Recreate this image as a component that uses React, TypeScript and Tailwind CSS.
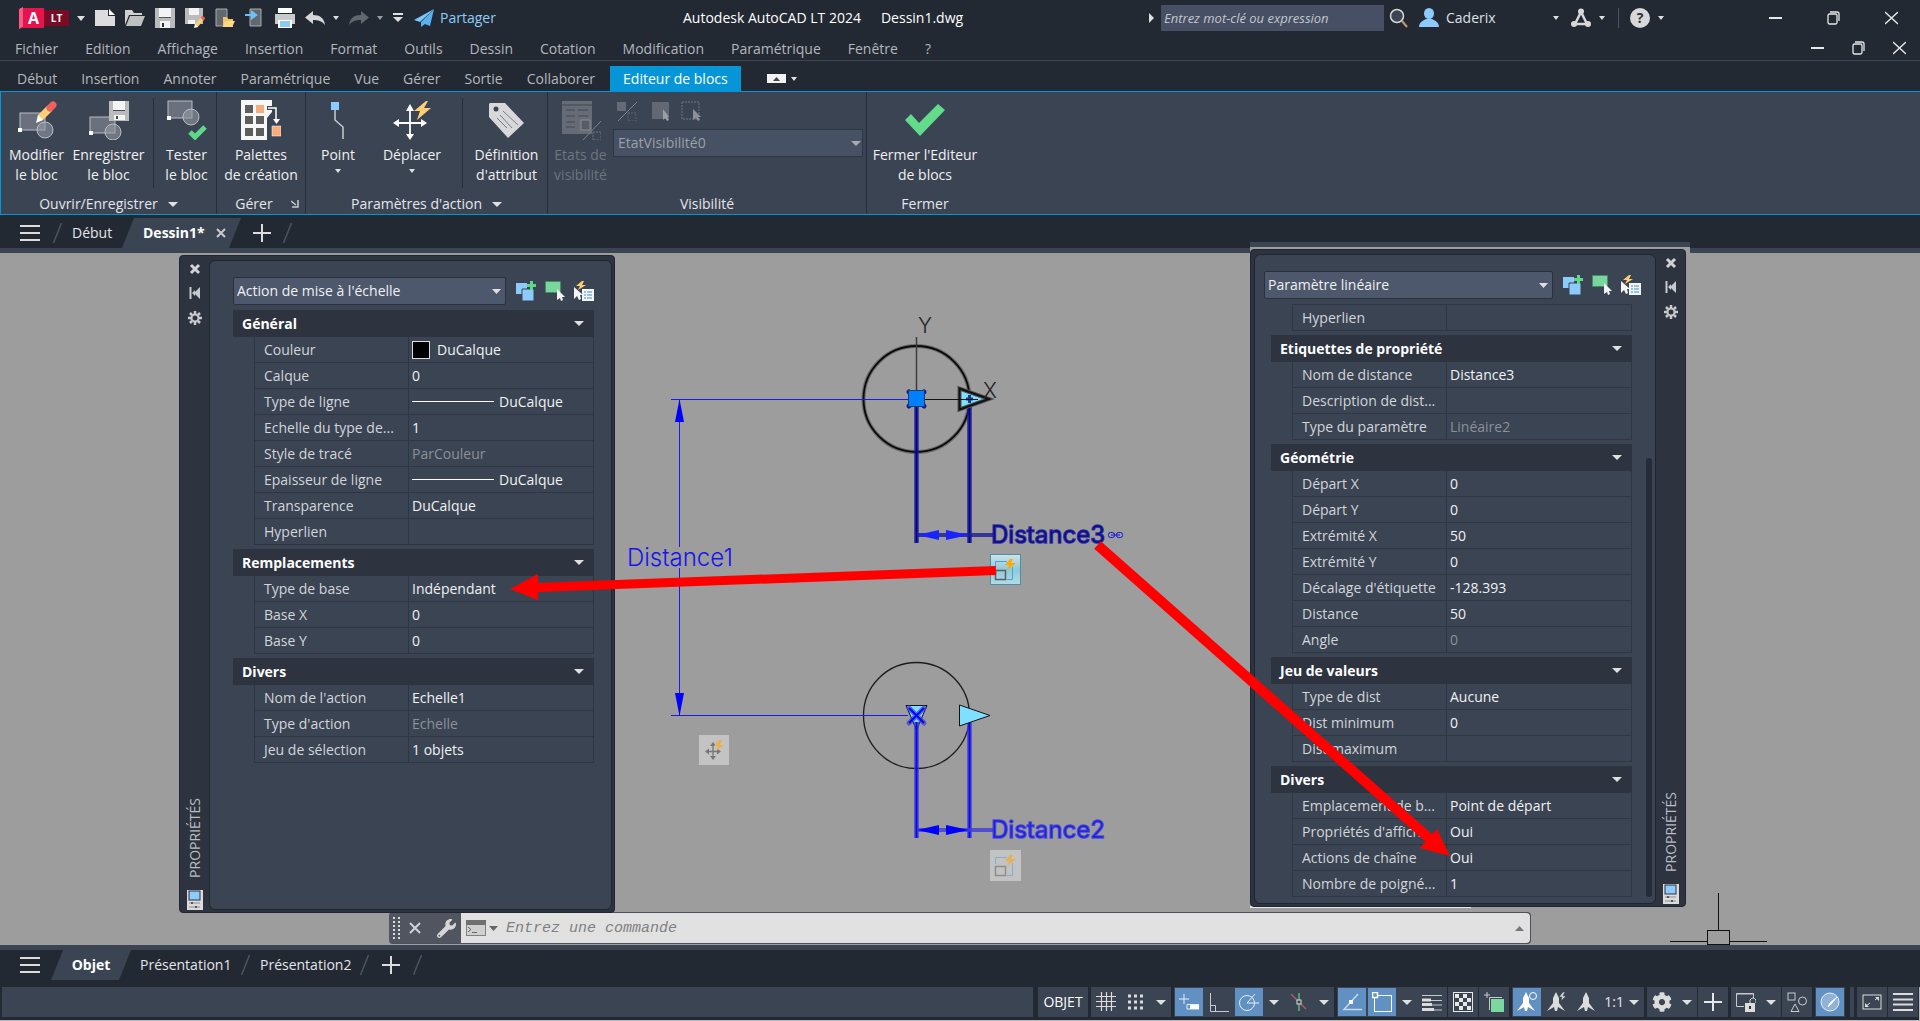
import React from "react";
import { FaCog, FaWrench } from "react-icons/fa";

type IconProps = {
  w?: number;
  h?: number;
  className?: string;
  children: React.ReactNode;
};

const Svg = ({ w = 20, h = 20, className = "", children }: IconProps) => (
  <svg width={w} height={h} viewBox={`0 0 ${w} ${h}`} className={`shrink-0 ${className}`} fill="none" aria-hidden="true">
    {children}
  </svg>
);

const Caret = ({ w = 10, h = 5, color = "#e0e0e0" }: { w?: number; h?: number; color?: string }) => (
  <Svg w={w} h={h}>
    <path d={`M0 0H${w}L${w / 2} ${h}Z`} fill={color} />
  </Svg>
);

const BOLT = "M14 0L2 10H8L5 19L19 7H12L16 0Z";

/* ---------- Title bar ---------- */

const QuickIcons = () => (
  <div className="flex items-center">
    <button aria-label="Nouveau" className="w-[30px]">
      <Svg>
        <path d="M0 2H13V8H20V18H0Z" fill="#dcdcdc" />
        <path d="M14 1L20 7H14Z" fill="#fff" />
      </Svg>
    </button>
    <button aria-label="Ouvrir" className="w-[30px]">
      <Svg>
        <path d="M0 2H7L9 5H17V7H4L0 17Z" fill="#d0d0d0" />
        <path d="M5 8H20L16 18H1Z" fill="#bfc0c2" />
      </Svg>
    </button>
    <button aria-label="Enregistrer" className="w-[30px]">
      <Svg>
        <path d="M0 0H20V20H0Z" fill="#b9bbbd" />
        <path d="M4 0H16V9H4ZM5 13H15V20H5Z" fill="#f4f4f4" />
        <path d="M4 9H16V10H4Z" fill="#55595f" />
        <path d="M7 15H9V19H7Z" fill="#333" />
      </Svg>
    </button>
    <button aria-label="Enregistrer sous" className="w-[30px]">
      <Svg>
        <path d="M0 0H18V16H0Z" fill="#b9bbbd" />
        <path d="M4 0H14V7H4ZM3 12H10V16H3Z" fill="#f4f4f4" />
        <path d="M11 18L17 11" stroke="#f5cf74" strokeWidth="4" />
        <path d="M17 11L19 9" stroke="#f06050" strokeWidth="4" />
        <path d="M9 20L10 16L13 19Z" fill="#fff" />
      </Svg>
    </button>
    <button aria-label="Ouvrir depuis le mobile" className="w-[30px]">
      <Svg>
        <path d="M1 1H12V18H1Z" fill="#63676e" stroke="#a9abae" />
        <path d="M8 9H12L13 11H18V19H8Z" fill="#f0c56a" />
        <path d="M10 13H20L17 19H8Z" fill="#ffd983" />
      </Svg>
    </button>
    <button aria-label="Enregistrer vers le mobile" className="w-[30px]">
      <Svg>
        <path d="M5 1H16V18H5Z" fill="#63676e" stroke="#a9abae" />
        <path d="M0 6H6V2L13 7L6 12V8H0Z" fill="#6fc1f7" />
      </Svg>
    </button>
    <button aria-label="Imprimer" className="w-[30px]">
      <Svg>
        <path d="M3 0H17V5H3Z" fill="#fff" />
        <path d="M0 6H20V16H0Z" fill="#c9cacc" />
        <path d="M3 12H17V20H3Z" fill="#fff" />
        <path d="M5 13H15V19H5Z" fill="#8ccaf8" />
      </Svg>
    </button>
    <button aria-label="Annuler" className="flex w-[44px] items-center gap-2">
      <Svg>
        <path d="M8 3V7C15 7 19 10 20 17C17 13 13 12 8 12V16L0 9.500Z" fill="#d6d6d6" />
      </Svg>
      <Caret w={6} h={4} />
    </button>
    <button aria-label="Rétablir" className="flex w-[44px] items-center gap-2">
      <Svg>
        <path d="M12 3V7C5 7 1 10 0 17C3 13 7 12 12 12V16L20 9.500Z" fill="#62666d" />
      </Svg>
      <Caret w={6} h={4} color="#9a9da2" />
    </button>
    <button aria-label="Personnaliser" className="w-[21px]">
      <Svg w={10} h={10}>
        <path d="M0 1H10" stroke="#e0e0e0" strokeWidth="2" />
        <path d="M0 4H10L5 9Z" fill="#e0e0e0" />
      </Svg>
    </button>
    <button className="flex items-center gap-[6px] text-[#8fcdf7]">
      <Svg>
        <path d="M20 1L0 12L6 14Z" fill="#7fc6f6" />
        <path d="M20 1L7 14V19L11 16L16 18Z" fill="#58b0ee" />
      </Svg>
      Partager
    </button>
  </div>
);

const WindowButtons = ({ small }: { small?: boolean }) => (
  <div className={small ? "flex items-center gap-[28px] pr-[14px]" : "flex items-center gap-[45px] pr-[22px]"}>
    <button aria-label="Réduire">
      <Svg w={13} h={14}>
        <path d="M0 7H13" stroke="#e8e8e8" strokeWidth="2" />
      </Svg>
    </button>
    <button aria-label="Restaurer">
      <Svg w={13} h={14}>
        <rect x="1" y="3" width="9" height="10" rx="1.500" stroke="#e8e8e8" strokeWidth="1.300" />
        <path d="M3 1H10Q12 1 12 3V10" stroke="#e8e8e8" strokeWidth="1.300" />
      </Svg>
    </button>
    <button aria-label="Fermer">
      <Svg w={13} h={14}>
        <path d="M0 1L13 13M13 1L0 13" stroke="#e8e8e8" strokeWidth="1.300" />
      </Svg>
    </button>
  </div>
);

const TitleBar = () => (
  <header className="flex h-9 items-center">
    <button aria-label="Menu de l'application" className="flex w-[95px] items-center gap-2 pl-[19px]">
      <span className="flex items-center text-white">
        <Svg w={4} h={22}>
          <path d="M4 0V20L0 22V2Z" fill="#ff5a83" />
        </Svg>
        <span className="flex h-5 w-[21px] items-center justify-center bg-[#e6134f] text-base font-bold">A</span>
        <span className="flex h-4 w-[25px] items-center justify-center bg-[#7a0a26] text-[10px] font-bold">LT</span>
      </span>
      <Caret w={8} h={5} />
    </button>
    <QuickIcons />
    <div className="ml-auto flex items-center">
      <h1 className="flex w-[466px] gap-5 text-white">
        <span>Autodesk AutoCAD LT 2024</span>
        <span>Dessin1.dwg</span>
      </h1>
      <Svg w={5} h={10} className="mr-[7px]">
        <path d="M0 0V10L5 5Z" fill="#e0e0e0" />
      </Svg>
      <input
        aria-label="Recherche"
        placeholder="Entrez mot-clé ou expression"
        className="h-[26px] w-[223px] bg-[#464f63] pl-[3px] text-[13px] italic placeholder:text-[#c3c6cc]"
      />
      <button aria-label="Rechercher" className="ml-[5px] w-[30px]">
        <Svg w={20} h={20}>
          <circle cx="8" cy="8" r="6.500" fill="#3d4552" stroke="#d8d8d8" strokeWidth="1.500" />
          <path d="M13 13L18 19" stroke="#c49a6c" strokeWidth="2" />
        </Svg>
      </button>
      <button className="flex w-[152px] items-center justify-between text-[#dfe1e4]">
        <span className="flex items-center gap-[7px]">
          <Svg>
            <ellipse cx="10" cy="5.500" rx="5" ry="5.500" fill="#8ccbfb" />
            <path d="M0 19C0 14 5 12 7 11H13C15 12 20 14 20 19Z" fill="#8ccbfb" />
          </Svg>
          Caderix
        </span>
        <span className="pr-3">
          <Caret w={6} h={4} />
        </span>
      </button>
      <button aria-label="Autodesk App Store" className="flex w-[47px] items-center gap-2">
        <Svg>
          <path d="M10 4L4 16H16Z" stroke="#d8d8d8" strokeWidth="2.500" />
          <circle cx="10" cy="3.500" r="3" fill="#d8d8d8" />
          <circle cx="3" cy="16" r="3" fill="#d8d8d8" />
          <circle cx="17" cy="16" r="3" fill="#d8d8d8" />
        </Svg>
        <Caret w={6} h={4} />
      </button>
      <button aria-label="Aide" className="flex items-center gap-2 border-l border-[#4a5468] pl-[11px]">
        <span className="flex size-5 items-center justify-center rounded-full bg-[#d8d8d8] font-bold text-[#2c323c]">?</span>
        <Caret w={6} h={4} />
      </button>
      <div className="w-[105px]" />
      <WindowButtons />
    </div>
  </header>
);

/* ---------- Menus and ribbon tabs ---------- */

const menus = ["Fichier", "Edition", "Affichage", "Insertion", "Format", "Outils", "Dessin", "Cotation", "Modification", "Paramétrique", "Fenêtre", "?"];

const ribbonTabs = ["Début", "Insertion", "Annoter", "Paramétrique", "Vue", "Gérer", "Sortie", "Collaborer"];

const MenuBar = () => (
  <nav className="flex h-[25px] items-center justify-between border-b border-[#3d4553] pl-[15px]">
    <div className="flex gap-[27px] pt-px text-[#b4b7bc]">
      {menus.map((m) => (
        <button key={m}>{m}</button>
      ))}
    </div>
    <WindowButtons small />
  </nav>
);

const RibbonTabs = () => (
  <nav className="flex h-[30px] items-end pl-[5px] text-[#b4b7bc]">
    {ribbonTabs.map((t) => (
      <button key={t} className="h-[25px] px-3">
        {t}
      </button>
    ))}
    <button className="ml-[3px] h-[25px] bg-[#0696d7] px-[13px] text-white">Editeur de blocs</button>
    <button aria-label="Réduire le ruban" className="ml-[26px] flex h-[25px] items-center gap-[5px]">
      <Svg w={19} h={9}>
        <rect width="19" height="9" fill="#f2f2f2" />
        <path d="M6 7H13L9.500 3Z" fill="#444" />
      </Svg>
      <Caret w={6} h={4} />
    </button>
  </nav>
);

/* ---------- Ribbon ---------- */

type RibbonButtonProps = {
  lines: string[];
  icon: React.ReactNode;
  className: string;
  drop?: boolean;
  disabled?: boolean;
};

const RibbonButton = ({ lines, icon, className, drop, disabled }: RibbonButtonProps) => (
  <button disabled={disabled} className={`flex flex-col items-center pt-2 ${disabled ? "text-[#6d7480]" : "text-[#f0f0f0]"} ${className}`}>
    {icon}
    <span className="mt-[5px] flex flex-col items-center leading-5 whitespace-nowrap">
      {lines.map((l) => (
        <span key={l}>{l}</span>
      ))}
    </span>
    {drop && (
      <span className="mt-1">
        <Caret w={6} h={4} />
      </span>
    )}
  </button>
);

const PanelTitle = ({ children }: { children: React.ReactNode }) => (
  <div className="flex h-5 items-center justify-center gap-[10px] leading-5 text-[#e4e6e9]">{children}</div>
);

const Divider = () => <div className="my-[6px] w-px bg-[#272d38]" />;

const EditBlockIcon = () => (
  <Svg w={40} h={40}>
    <rect x="3" y="13" width="25" height="17" fill="#6a707e" stroke="#b9bcc2" />
    <circle cx="28" cy="30" r="8" fill="#949aa5" fillOpacity=".6" stroke="#b9bcc2" />
    <rect x="1" y="28" width="4" height="4" fill="#fff" />
    <path d="M23 18L33 8" stroke="#ffcf77" strokeWidth="7" />
    <path d="M33 8L36 5" stroke="#f0605c" strokeWidth="7" strokeLinecap="round" />
    <path d="M19 23L21 15L26 20Z" fill="#fff" />
  </Svg>
);

const SaveBlockIcon = () => (
  <Svg w={40} h={40}>
    <rect x="1" y="17" width="25" height="16" fill="#6a707e" stroke="#b9bcc2" />
    <circle cx="24" cy="32" r="8" fill="#949aa5" fillOpacity=".6" stroke="#b9bcc2" />
    <rect x="0" y="31" width="4" height="4" fill="#fff" />
    <path d="M20 1H40V21H20Z" fill="#b9bbbd" />
    <path d="M24 1H36V10H24ZM25 15H36V20H25Z" fill="#f4f4f4" />
    <path d="M24 10H36V11H24ZM27 16H29V19H27Z" fill="#444950" />
  </Svg>
);

const TestBlockIcon = () => (
  <Svg w={40} h={40}>
    <rect x="1" y="1" width="24" height="17" fill="#6a707e" stroke="#b9bcc2" />
    <circle cx="24" cy="17" r="8" fill="#949aa5" fillOpacity=".6" stroke="#b9bcc2" />
    <rect x="0" y="16" width="4" height="4" fill="#fff" />
    <path d="M23 32L28 37L38 27" stroke="#5fd88a" strokeWidth="5" />
  </Svg>
);

const PalettesIcon = () => (
  <Svg w={40} h={40}>
    <path d="M0 0H31V12L26 18V40H0Z" fill="#f7f7f7" />
    {[5, 16, 28].map((y) => (
      <g key={y}>
        <rect x="4" y={y} width="8" height="8" fill="#5d5d5d" />
        <rect x="15" y={y} width="8" height="8" fill={y === 5 ? "#f5ad7e" : "#5d5d5d"} />
      </g>
    ))}
    <path d="M26 8H35V24" stroke="#3b4453" strokeWidth="4" />
    <path d="M27 8H35V21" stroke="#fff" strokeWidth="1.500" />
    <path d="M32 19H39L35.500 24Z" fill="#fff" />
    <rect x="31" y="26" width="9" height="10" fill="#f5ad7e" stroke="#fff" strokeWidth=".5" />
  </Svg>
);

const PointIcon = () => (
  <Svg w={40} h={40}>
    <path d="M17 10V20L25 27V39" stroke="#c9ccd0" strokeWidth="1.500" />
    <rect x="13" y="2" width="8" height="8" fill="#8ccbfb" />
  </Svg>
);

const MoveIcon = () => (
  <Svg w={40} h={40}>
    <path d="M18 8V37M4 23H32" stroke="#fff" strokeWidth="1.800" />
    <path d="M18 4L22 11H14ZM18 40L22 34H14ZM1 23L7 19V27ZM35 23L29 19V27Z" fill="#fff" />
    <path d={BOLT} transform="translate(20 1)" fill="#ffcf77" />
  </Svg>
);

const TagIcon = () => (
  <Svg w={40} h={40}>
    <path d="M3 3H18L37 23L21 38L2 17V4Z" fill="#d8d8da" />
    <circle cx="9" cy="9" r="2.500" fill="#3b4453" />
    <path d="M16 11L31 25M13 15L25 28M10 18L20 28" stroke="#777c84" />
  </Svg>
);

const VisibilityStatesIcon = () => (
  <Svg w={40} h={40}>
    <rect x="1" y="1" width="30" height="33" fill="#666b75" />
    <path d="M1 5H31M5 10H14M17 10H27M5 16H14M17 16H27M5 22H14M5 27H14" stroke="#434a57" />
    <rect x="20" y="20" width="9" height="10" fill="#565c67" stroke="#8a8f98" />
    <path d="M22 40L41 20" stroke="#7e838d" />
    <rect x="32" y="32" width="8" height="8" stroke="#6d727d" strokeDasharray="2 1" />
  </Svg>
);

const CheckIcon = () => (
  <Svg w={40} h={40}>
    <path d="M0 20L6 14L14 23L33 4L40 10L15 36Z" fill="#62dc8b" />
  </Svg>
);

const Ribbon = () => (
  <section className="flex h-[124px] border border-r-0 border-[#0696d7] bg-[#3b4453]">
    <div className="flex w-[216px] flex-col border-r border-[#272d38]">
      <div className="flex flex-1">
        <RibbonButton className="w-[71px]" lines={["Modifier", "le bloc"]} icon={<EditBlockIcon />} />
        <RibbonButton className="w-[73px]" lines={["Enregistrer", "le bloc"]} icon={<SaveBlockIcon />} />
        <div className="ml-2 flex flex-1">
          <Divider />
          <RibbonButton className="flex-1 pl-[3px]" lines={["Tester", "le bloc"]} icon={<TestBlockIcon />} />
        </div>
      </div>
      <PanelTitle>
        Ouvrir/Enregistrer <Caret />
      </PanelTitle>
    </div>
    <div className="flex w-[89px] flex-col border-r border-[#272d38]">
      <RibbonButton className="flex-1" lines={["Palettes", "de création"]} icon={<PalettesIcon />} />
      <PanelTitle>
        <span className="pl-3">Gérer</span>
        <Svg w={8} h={8} className="ml-2">
          <path d="M0 1L5 5M7 0V7H1" stroke="#c8cacc" strokeWidth="1.500" />
        </Svg>
      </PanelTitle>
    </div>
    <div className="flex w-[242px] flex-col border-r border-[#272d38]">
      <div className="flex flex-1">
        <RibbonButton className="w-[64px]" drop lines={["Point"]} icon={<PointIcon />} />
        <RibbonButton className="w-[84px]" drop lines={["Déplacer"]} icon={<MoveIcon />} />
        <div className="ml-2 flex flex-1">
          <Divider />
          <RibbonButton className="flex-1 pl-[3px]" lines={["Définition", "d'attribut"]} icon={<TagIcon />} />
        </div>
      </div>
      <PanelTitle>
        Paramètres d'action <Caret />
      </PanelTitle>
    </div>
    <div className="flex w-[319px] flex-col border-r border-[#272d38]">
      <div className="flex flex-1">
        <RibbonButton className="w-[65px]" disabled lines={["Etats de", "visibilité"]} icon={<VisibilityStatesIcon />} />
        <div className="flex flex-col gap-2 pt-[9px]">
          <div className="flex gap-3 pl-1">
            <button disabled aria-label="Mode de visibilité">
              <Svg>
                <rect x="0" y="1" width="9" height="9" fill="#666b75" />
                <path d="M1 20L20 1" stroke="#7e838d" />
                <rect x="11" y="12" width="8" height="8" stroke="#5c626d" strokeDasharray="2 1" />
              </Svg>
            </button>
            <button disabled aria-label="Rendre visible">
              <Svg>
                <rect x="3" y="1" width="17" height="17" fill="#636873" />
                <path d="M14 8V19L16 17L18 20L20 19L18 16H20Z" fill="#9b9fa6" />
              </Svg>
            </button>
            <button disabled aria-label="Rendre invisible">
              <Svg>
                <rect x="1" y="1" width="17" height="17" stroke="#6f747e" strokeDasharray="2 1" />
                <path d="M12 8V19L15 17L17 20L19 19L17 16H20Z" fill="#8c9098" />
              </Svg>
            </button>
          </div>
          <div className="relative">
            <select
              disabled
              aria-label="Etat de visibilité"
              className="block h-7 w-[250px] appearance-none border border-[#2f3643] bg-[#475164] pl-1 text-[#9aa0a9] opacity-100"
            >
              <option>EtatVisibilité0</option>
            </select>
            <span className="pointer-events-none absolute top-3 right-[2px]">
              <Caret color="#a9abb2" />
            </span>
          </div>
        </div>
      </div>
      <PanelTitle>Visibilité</PanelTitle>
    </div>
    <div className="flex w-[116px] flex-col">
      <RibbonButton className="flex-1" lines={["Fermer l'Editeur", "de blocs"]} icon={<CheckIcon />} />
      <PanelTitle>Fermer</PanelTitle>
    </div>
  </section>
);

/* ---------- Tab strips ---------- */

const Hamburger = () => (
  <Svg w={20} h={18}>
    <path d="M0 2H20M0 9H20M0 16H20" stroke="#dcdcdc" strokeWidth="2" />
  </Svg>
);

const Slash = () => (
  <Svg w={9} h={20}>
    <path d="M8.500 0L.500 20" stroke="#4b5464" strokeWidth="1.500" />
  </Svg>
);

const Plus = () => (
  <Svg w={18} h={18}>
    <path d="M9 0V18M0 9H18" stroke="#dcdcdc" strokeWidth="2" />
  </Svg>
);

const FileTabs = () => (
  <nav className="flex h-[33px] items-center pt-[2px] pl-5 text-[#e4e6e9]">
    <button aria-label="Menu des fichiers" className="mr-[13px]">
      <Hamburger />
    </button>
    <Slash />
    <button className="ml-[10px] w-[50px] text-left">Début</button>
    <div className="flex h-[30px] w-[119px] items-center gap-[11px] self-end bg-[#3b4453] pl-[21px] [clip-path:polygon(12px_0,100%_0,107px_100%,0_100%)]">
      <button className="font-bold text-white">Dessin1*</button>
      <button aria-label="Fermer Dessin1">
        <Svg w={10} h={10}>
          <path d="M1 1L9 9M9 1L1 9" stroke="#c8cacc" strokeWidth="2" />
        </Svg>
      </button>
    </div>
    <button aria-label="Nouveau dessin" className="mr-3 ml-3">
      <Plus />
    </button>
    <Slash />
  </nav>
);

const LayoutTabs = () => (
  <nav className="flex h-[42px] items-start border-t-[5px] border-[#3b4453] pl-5 text-[#e4e6e9]">
    <div className="flex h-[30px] items-center">
      <button aria-label="Menu des présentations" className="w-[31px]">
        <Hamburger />
      </button>
      <button className="h-full w-[80px] bg-[#3b4453] font-bold text-white [clip-path:polygon(12px_0,100%_0,68px_100%,0_100%)]">Objet</button>
      <button className="w-[110px] pl-[9px] text-left">Présentation1</button>
      <Slash />
      <button className="w-[110px] pl-[10px] text-left">Présentation2</button>
      <Slash />
      <button aria-label="Nouvelle présentation" className="mx-[13px]">
        <Plus />
      </button>
      <Slash />
    </div>
  </nav>
);

/* ---------- Property palettes ---------- */

type Row = {
  label: string;
  value?: string;
  dim?: boolean;
  swatch?: "color" | "line";
};

type SectionData = {
  title?: string;
  rows: Row[];
};

const actionSections: SectionData[] = [
  {
    title: "Général",
    rows: [
      { label: "Couleur", value: "DuCalque", swatch: "color" },
      { label: "Calque", value: "0" },
      { label: "Type de ligne", value: "DuCalque", swatch: "line" },
      { label: "Echelle du type de...", value: "1" },
      { label: "Style de tracé", value: "ParCouleur", dim: true },
      { label: "Epaisseur de ligne", value: "DuCalque", swatch: "line" },
      { label: "Transparence", value: "DuCalque" },
      { label: "Hyperlien" },
    ],
  },
  {
    title: "Remplacements",
    rows: [
      { label: "Type de base", value: "Indépendant" },
      { label: "Base X", value: "0" },
      { label: "Base Y", value: "0" },
    ],
  },
  {
    title: "Divers",
    rows: [
      { label: "Nom de l'action", value: "Echelle1" },
      { label: "Type d'action", value: "Echelle", dim: true },
      { label: "Jeu de sélection", value: "1 objets" },
    ],
  },
];

const linearSections: SectionData[] = [
  { rows: [{ label: "Hyperlien" }] },
  {
    title: "Etiquettes de propriété",
    rows: [
      { label: "Nom de distance", value: "Distance3" },
      { label: "Description de dist..." },
      { label: "Type du paramètre", value: "Linéaire2", dim: true },
    ],
  },
  {
    title: "Géométrie",
    rows: [
      { label: "Départ X", value: "0" },
      { label: "Départ Y", value: "0" },
      { label: "Extrémité X", value: "50" },
      { label: "Extrémité Y", value: "0" },
      { label: "Décalage d'étiquette", value: "-128.393" },
      { label: "Distance", value: "50" },
      { label: "Angle", value: "0", dim: true },
    ],
  },
  {
    title: "Jeu de valeurs",
    rows: [
      { label: "Type de dist", value: "Aucune" },
      { label: "Dist minimum", value: "0" },
      { label: "Dist maximum" },
    ],
  },
  {
    title: "Divers",
    rows: [
      { label: "Emplacement de b...", value: "Point de départ" },
      { label: "Propriétés d'affich...", value: "Oui" },
      { label: "Actions de chaîne", value: "Oui" },
      { label: "Nombre de poigné...", value: "1" },
    ],
  },
];

const Section = ({ title, rows }: SectionData) => (
  <div className="mb-1">
    {title && (
      <button className="flex h-[27px] w-full items-center justify-between bg-[#2d333f] pr-[10px] pl-[9px] font-bold text-white">
        {title}
        <Caret />
      </button>
    )}
    <table className={`ml-[21px] w-[340px] table-fixed border-separate border-spacing-0 text-[#d2d5d9] ${title ? "" : "border-t border-[#2f3643]"}`}>
      <tbody>
        {rows.map((r) => (
          <tr key={r.label} className="h-[26px] leading-5">
            <th scope="row" className="w-[155px] overflow-hidden border-x border-b border-[#2f3643] p-0 pl-[9px] text-left font-normal whitespace-nowrap">
              {r.label}
            </th>
            <td className={`border-r border-b border-[#2f3643] p-0 pl-[3px] ${r.dim ? "text-[#8b9099]" : "text-[#f0f1f2]"}`}>
              <span className="flex items-center">
                {r.swatch === "color" && <span className="mr-[7px] size-[18px] border border-[#dcdcdc] bg-black" />}
                {r.swatch === "line" && <span className="mr-[5px] h-px w-[82px] bg-white" />}
                {r.value}
              </span>
            </td>
          </tr>
        ))}
      </tbody>
    </table>
  </div>
);

const PaletteTools = () => (
  <div className="flex gap-[9px]">
    <button aria-label="Ajouter à la sélection">
      <Svg>
        <path d="M0 2H11V13H0Z" fill="#8ccbfb" />
        <path d="M6 8H18V20H6Z" fill="#8ccbfb" stroke="#3b4453" />
        <path d="M15.500 0V9M11 4.500H20" stroke="#5fd88a" strokeWidth="3" />
      </Svg>
    </button>
    <button aria-label="Choisir des objets">
      <Svg>
        <rect x=".5" y=".5" width="15" height="11" fill="#79d79d" stroke="#3f8a5e" strokeDasharray="2 1" />
        <path d="M12 8V19L15 17L16 20L18 19L17 16H20Z" fill="#f4f4f4" />
      </Svg>
    </button>
    <button aria-label="Sélection rapide">
      <Svg>
        <path d="M8 0L2 5H6L4 9L12 4H8L10 0Z" fill="#ffcf77" />
        <path d="M0 6V18L3 15L5 19L7 18L6 14H9Z" fill="#f4f4f4" />
        <rect x="8" y="8" width="12" height="12" fill="#f4f4f4" />
        <path d="M10 11H12M13 11H18M10 14H12M13 14H18M10 17H12M13 17H18" stroke="#3a8fd0" />
      </Svg>
    </button>
  </div>
);

const PaletteStrip = () => (
  <div className="flex w-[29px] flex-col items-center pt-[3px]">
    <button aria-label="Fermer la palette" className="flex h-6 items-start">
      <Svg w={12} h={12}>
        <path d="M2 2L10 10M10 2L2 10" stroke="#d0d2d5" strokeWidth="3" />
      </Svg>
    </button>
    <button aria-label="Masquer automatiquement" className="flex h-6 items-start">
      <Svg w={12} h={12}>
        <path d="M1.500 0V12" stroke="#c8cacd" strokeWidth="2" />
        <path d="M3 6L6 3V9ZM5 6L11 0V12Z" fill="#c8cacd" />
      </Svg>
    </button>
    <button aria-label="Propriétés de la palette">
      <Svg w={14} h={14}>
        <circle cx="7" cy="7" r="3.500" stroke="#c8cacd" strokeWidth="2" />
        <path d="M7 0V3M7 11V14M0 7H3M11 7H14M2 2L4 4M10 10L12 12M12 2L10 4M4 10L2 12" stroke="#c8cacd" strokeWidth="2.500" />
      </Svg>
    </button>
    <span className="mt-auto mb-3 rotate-180 text-sm text-[#b9bcc2] [writing-mode:vertical-rl]">PROPRIÉTÉS</span>
    <Svg w={16} h={20}>
      <rect width="16" height="20" fill="#dcdcdc" />
      <rect x="2" y="1" width="11" height="9" fill="#8ccbfb" stroke="#2d333f" />
      <path d="M2 13H13M2 17H13" stroke="#8a8d92" />
      <path d="M5 12V14M9 16V18" stroke="#55595f" strokeWidth="2" />
    </Svg>
  </div>
);

type PaletteProps = {
  name: string;
  sections: SectionData[];
  side: "left" | "right";
};

const Palette = ({ name, sections, side }: PaletteProps) => (
  <aside
    className={`absolute flex h-[658px] w-[436px] rounded border border-[#20252f] bg-[#2d333f] pt-1 pb-[2px] ${
      side === "left" ? "top-[2px] left-[179px] pr-[2px]" : "top-[-4px] left-[1250px] flex-row-reverse pl-[3px]"
    }`}
  >
    <PaletteStrip />
    <div className="flex flex-1 rounded-md border border-[#20252f] bg-[#3b4453]">
      <div className={side === "left" ? "w-[384px] pt-4 pl-[23px]" : "w-[386px] pt-4 pl-[9px]"}>
        <div className="flex items-center justify-between">
          <div className="relative">
            <select
              aria-label="Type d'objet"
              className={`block h-7 appearance-none rounded-xs border border-[#2a303c] bg-[#4d586c] pl-[3px] text-[#f0f1f2] ${
                side === "left" ? "w-[273px]" : "w-[289px]"
              }`}
            >
              <option>{name}</option>
            </select>
            <span className="pointer-events-none absolute top-3 right-[5px]">
              <Caret w={9} />
            </span>
          </div>
          <PaletteTools />
        </div>
        <div className={side === "left" ? "w-[361px] pt-[5px]" : "ml-[7px] w-[361px] pt-[5px]"}>
          {sections.map((s, i) => (
            <Section key={i} {...s} />
          ))}
        </div>
      </div>
      {side === "right" && <div className="mb-[6px] ml-[5px] h-[439px] w-[6px] self-end rounded-full bg-[#262c37]" />}
    </div>
  </aside>
);

/* ---------- Drawing ---------- */

const LinearParameter = ({ top, dim, label, selected }: { top: number; dim: number; label: string; selected?: boolean }) => {
  const core = selected ? "#00008c" : "#0808f0";
  const glow = selected ? "#1c1c96" : "#3c3cdc";
  return (
    <g>
      <path d={`M916.500 ${top}V${dim + 8}M969.500 ${top}V${dim + 8}`} stroke={glow} strokeOpacity=".7" strokeWidth="5" />
      <path d={`M916.500 ${top}V${dim + 8}M969.500 ${top}V${dim + 8}`} stroke={core} strokeWidth="2" />
      <path d={`M917 ${dim}H993`} stroke={glow} strokeWidth="4" strokeOpacity=".8" />
      <path d={`M917 ${dim}L939 ${dim - 5}V${dim + 5}ZM969 ${dim}L946 ${dim - 5}V${dim + 5}Z`} fill={selected ? "#1a24ff" : "#0000ff"} />
      <text
        x="991"
        y={dim + 8}
        fontSize="24"
        fontFamily="Inter, sans-serif"
        fill={core}
        stroke={glow}
        strokeWidth="1.500"
        strokeOpacity=".8"
      >
        {label}
      </text>
    </g>
  );
};

const ScaleBadge = ({ x, y, active }: { x: number; y: number; active?: boolean }) => (
  <g transform={`translate(${x} ${y})`}>
    <rect x=".5" y=".5" width="30" height="30" fill={active ? "url(#badge)" : "#c3c3c3"} stroke={active ? "#4c8fa6" : "#c3c3c3"} />
    <path d="M5.500 14V7.500H17M22.500 13V25.500H17" stroke={active ? "#4aa3d8" : "#7fb0d2"} />
    <rect x="5.500" y="16.500" width="10" height="9" stroke={active ? "#5a5f66" : "#8d8d8d"} strokeWidth="1.500" />
    <path d="M20 5L15 11H19L17 16L26 9H21L23 5Z" fill={active ? "#ffa800" : "#e6b155"} />
  </g>
);

// Coordinates are measured from the top of the window, 253px above the canvas.
const Drawing = () => (
  <svg className="absolute inset-0 size-full" fill="none">
    <defs>
      <linearGradient id="badge" x1="0" y1="0" x2="0" y2="1">
        <stop offset="0" stopColor="#cfe2ea" />
        <stop offset=".5" stopColor="#8fc9da" />
        <stop offset="1" stopColor="#b3dbe6" />
      </linearGradient>
    </defs>
    <g transform="translate(0 -253)">
      <circle cx="916.500" cy="399" r="53" stroke="#555" strokeWidth="4" strokeOpacity=".7" />
      <circle cx="916.500" cy="399" r="53" stroke="#0a0a0a" strokeWidth="1.800" />
      <circle cx="916.500" cy="715.500" r="53" stroke="#1c1c1c" strokeWidth="1.300" />

      <g stroke="#1a1aec">
        <path d="M671 399.500H908M671 715.500H908" />
        <path d="M679.500 399V547M679.500 568V716" />
      </g>
      <path d="M679.500 399L684 422H675ZM679.500 716L684 693H675Z" fill="#0000ff" />
      <text x="627" y="566" fontSize="24" fontWeight="300" fontFamily="Inter, sans-serif" fill="#1414f0">
        Distance1
      </text>

      <path d="M906 705.500H927L916.500 730Z" fill="#7fdfff" stroke="#111" />
      <LinearParameter top={407} dim={535} label="Distance3" selected />
      <LinearParameter top={722} dim={830} label="Distance2" />
      <path d="M909 708L924 723M924 708L909 723" stroke="#3c3cdc" strokeOpacity=".7" strokeWidth="5" strokeLinecap="round" />
      <path d="M909 708L924 723M924 708L909 723" stroke="#0808f0" strokeWidth="2" />
      <path d="M959.500 705V726L990 715.500Z" fill="#7fdfff" stroke="#111" />

      <path d="M959.500 388.500V409.500L989 399Z" fill="#7fdfff" stroke="#555" strokeWidth="4" />
      <path d="M959.500 388.500V409.500L989 399Z" stroke="#111" strokeWidth="2" />
      <path d="M966 399H973M969.500 395V403" stroke="#1a3c8c" strokeWidth="3" />
      <path d="M916.500 337V391" stroke="#3c3c3c" strokeWidth="1.500" />
      <path d="M925 399.500H978" stroke="#111" />
      <text x="918" y="333" fontSize="21" fontWeight="300" fontFamily="Inter, sans-serif" fill="#222">
        Y
      </text>
      <text x="983" y="398" fontSize="21" fontWeight="300" fontFamily="Inter, sans-serif" fill="#222">
        X
      </text>
      <path d="M909 392L924 406M924 392L909 406" stroke="#16168c" strokeWidth="5" strokeLinecap="round" />
      <rect x="908.500" y="390.500" width="16" height="16" fill="#0080ff" stroke="#1c3c6c" />

      <g stroke="#1010e0">
        <rect x="1108.500" y="532.500" width="6" height="5" rx="2" />
        <rect x="1116.500" y="532.500" width="6" height="5" rx="2" />
        <path d="M1111 535H1120" />
      </g>

      <ScaleBadge x={990} y={554} active />
      <ScaleBadge x={990} y={850} />
      <g transform="translate(699 735)">
        <rect width="30" height="30" fill="#c3c3c3" />
        <path d="M14 9V23M7 16.500H20" stroke="#777" strokeWidth="1.300" />
        <path d="M14 7L17 11H11ZM14 25L17 21H11ZM6 16.500L10 13.500V19.500ZM22 16.500L18 13.500V19.500Z" fill="#777" />
        <path d="M20 5L15 11H19L17 16L25 10H21L23 5Z" fill="#e6b155" />
      </g>

      <path d="M1718.500 893V930M1670 941.500H1707M1730 941.500H1767" stroke="#111" />
      <rect x="1707.500" y="930.500" width="22" height="14" stroke="#111" />
    </g>
  </svg>
);

const Callouts = () => (
  <svg className="pointer-events-none absolute inset-0 size-full" fill="none">
    <g transform="translate(0 -253)">
      <path d="M996 570.500L536 587.500" stroke="#f00" strokeWidth="9" />
      <path d="M510 589L538 574V600Z" fill="#f00" />
      <path d="M1097.500 545L1430 839" stroke="#f00" strokeWidth="10" />
      <path d="M1450 856L1437 829L1420 848Z" fill="#f00" />
    </g>
  </svg>
);

const CommandLine = () => (
  <div className="absolute right-[389px] bottom-px left-[389px] flex h-8 items-center rounded-sm border border-l-0 border-[#4c515b] bg-[#50555f]">
    <Svg w={8} h={22} className="mr-2 ml-1">
      <path d="M1 0V22M6 0V22" stroke="#dcdcdc" strokeWidth="2" strokeDasharray="2 2" />
    </Svg>
    <button aria-label="Fermer la ligne de commande" className="mr-4">
      <Svg w={12} h={12}>
        <path d="M1 1L11 11M11 1L1 11" stroke="#d0d2d5" strokeWidth="2" />
      </Svg>
    </button>
    <button aria-label="Personnaliser" className="text-[19px] text-[#d6d6d6]">
      <FaWrench />
    </button>
    <div className="ml-[5px] flex h-full flex-1 items-center rounded-r-sm bg-[#e1e1e1] pr-[6px] pl-[5px]">
      <button aria-label="Commandes récentes" className="flex items-center gap-[3px]">
        <Svg w={20} h={16}>
          <rect x=".5" y=".5" width="19" height="15" fill="#d0d0d0" stroke="#808080" />
          <path d="M0 0H20V5H0Z" fill="#707070" />
          <path d="M2 7L5 9.500L2 12M6 12.500H11" stroke="#666" />
        </Svg>
        <Caret w={9} h={5} color="#666" />
      </button>
      <input
        aria-label="Ligne de commande"
        placeholder="Entrez une commande"
        className="h-full flex-1 pl-2 font-['Liberation_Mono',monospace] text-[15px] italic placeholder:text-[#808080]"
      />
      <button aria-label="Historique">
        <Svg w={9} h={5}>
          <path d="M0 5H9L4.500 0Z" fill="#777" />
        </Svg>
      </button>
    </div>
  </div>
);

/* ---------- Status bar ---------- */

type StatusButtonProps = {
  label: string;
  on?: boolean;
  children: React.ReactNode;
};

const StatusButton = ({ label, on, children }: StatusButtonProps) => (
  <button aria-label={label} className={`flex h-[30px] w-[30px] items-center justify-center border border-[#3b4453] ${on ? "bg-[#6191c2]" : "bg-[#3b4453]"}`}>
    <Svg>{children}</Svg>
  </button>
);

const StatusCaret = () => (
  <button aria-label="Options" className="flex h-[30px] w-[20px] items-center justify-center bg-[#3b4453]">
    <Caret />
  </button>
);

const NorthArrow = ({ color = "#dcdcdc" }: { color?: string }) => <path d="M9 0L12 6V11L18 19L11 15L10 19H8L7 15L0 19L6 11V6Z" fill={color} />;

const StatusBar = () => (
  <footer className="flex h-[34px] items-start gap-[3px] border-r border-b border-[#b9b9b9] pr-px pb-[3px] pl-[2px] text-[#e4e6e9]">
    <div className="mr-[2px] h-[30px] flex-1 bg-[#3b4453]" />
    <button className="h-[30px] w-[50px] bg-[#3b4453] text-white">OBJET</button>
    <div className="flex">
      <StatusButton label="Grille">
        <path d="M5.500 0V19M10.500 0V19M15.500 0V19M0 4.500H20M0 9.500H20M0 14.500H20" stroke="#dcdcdc" strokeWidth="1.200" />
      </StatusButton>
      <StatusButton label="Accrochage">
        <path d="M2 4H17M2 10H17M2 16H17" stroke="#dcdcdc" strokeWidth="3" strokeDasharray="3 3" />
      </StatusButton>
      <StatusCaret />
    </div>
    <div className="flex">
      <StatusButton label="Saisie dynamique" on>
        <path d="M5 2V12M0 7H10M8 12.500H20V17H8Z" stroke="#e8eef5" />
        <rect x="11" y="13" width="9" height="4" fill="#fff" />
      </StatusButton>
      <StatusButton label="Ortho">
        <path d="M1.500 1V19.500H20M1.500 13.500H6.500V19" stroke="#c8cacd" />
      </StatusButton>
      <StatusButton label="Repérage polaire" on>
        <circle cx="8" cy="11" r="7.500" stroke="#e8eef5" />
        <path d="M16 2L8 11H20" stroke="#e8eef5" />
      </StatusButton>
      <StatusCaret />
      <StatusButton label="Dessin isométrique">
        <path d="M2 2L17 17" stroke="#a85c60" strokeWidth="1.500" />
        <path d="M10 1V19" stroke="#55b877" strokeWidth="1.500" />
        <rect x="8" y="8" width="4" height="4" fill="#3b4453" stroke="#dcdcdc" />
      </StatusButton>
      <StatusCaret />
    </div>
    <div className="flex">
      <StatusButton label="Repérage d'accrochage" on>
        <path d="M16 2L2 17.500H20" stroke="#c9d8e8" strokeWidth="1.500" />
        <rect x="7" y="8" width="4" height="4" fill="#fff" />
      </StatusButton>
      <StatusButton label="Accrochage aux objets" on>
        <rect x="2.500" y="3.500" width="17" height="16" stroke="#fff" />
        <rect x=".5" y=".5" width="5" height="5" fill="#6191c2" stroke="#fff" strokeWidth="1.500" />
      </StatusButton>
      <StatusCaret />
      <div className="flex gap-px">
        <StatusButton label="Epaisseur de ligne">
          <path d="M0 3.500H20M0 8.500H20M0 13H20M0 18H20" stroke="#c8cacd" />
          <path d="M0 8H9M0 12.500H10M0 17.500H12" stroke="#dcdcdc" strokeWidth="3" />
        </StatusButton>
        <StatusButton label="Transparence">
          <rect x=".5" y=".5" width="19" height="19" stroke="#e8e8e8" />
          <path d="M2 4H18M2 12H18" stroke="#e8e8e8" strokeWidth="4" strokeDasharray="4 4" />
          <path d="M6 8H18M6 16H18" stroke="#e8e8e8" strokeWidth="4" strokeDasharray="4 4" />
        </StatusButton>
        <StatusButton label="Cycle de sélection">
          <path d="M3 0V6M0 3H6M5.500 18V5.500H18" stroke="#c8cacd" />
          <rect x="7" y="7" width="13" height="13" fill="#7bd8a0" />
        </StatusButton>
      </div>
    </div>
    <div className="flex">
      <StatusButton label="Visibilité des annotations" on>
        <NorthArrow color="#fff" />
        <circle cx="16" cy="4" r="3.500" stroke="#fff" fill="#6191c2" />
      </StatusButton>
      <StatusButton label="Echelle automatique">
        <NorthArrow />
        <path d="M16 0L12 5H15L14 9L19 4H16L18 0Z" fill="#dcdcdc" stroke="#3b4453" strokeWidth=".6" />
      </StatusButton>
      <StatusButton label="Annotations">
        <NorthArrow />
      </StatusButton>
      <button className="flex h-[30px] w-[42px] items-center justify-end gap-[5px] bg-[#3b4453] pr-[5px]">
        1:1 <Caret />
      </button>
    </div>
    <div className="flex gap-px">
      <button aria-label="Espace de travail" className="flex h-[30px] w-[50px] items-center justify-between bg-[#3b4453] pr-[5px] pl-[5px] text-xl text-[#dcdcdc]">
        <FaCog />
        <Caret />
      </button>
      <StatusButton label="Moniteur d'annotations">
        <path d="M10 1V19M1 10H19" stroke="#e8e8e8" strokeWidth="2" />
      </StatusButton>
    </div>
    <div className="flex gap-px">
      <div className="flex">
        <StatusButton label="Verrouiller l'interface">
          <path d="M8 14.500H.500V1.500H17.500V6M0 2H18" stroke="#c8cacd" />
          <rect x="9" y="11" width="10" height="9" fill="#dcdcdc" />
          <path d="M14 11V8Q17 4 20 8V11" stroke="#dcdcdc" />
          <rect x="13" y="14" width="2" height="3" fill="#333" />
        </StatusButton>
        <StatusCaret />
      </div>
      <StatusButton label="Isoler les objets">
        <rect x="1" y="1" width="7" height="7" stroke="#c8cacd" />
        <circle cx="15.500" cy="9" r="4" stroke="#c8cacd" />
        <path d="M4 19.500L8 12L12 19.500Z" stroke="#c8cacd" />
      </StatusButton>
    </div>
    <StatusButton label="Accélération matérielle" on>
      <circle cx="10" cy="10" r="9" fill="#8fb2d6" stroke="#e8eef5" />
      <path d="M8 15L11 12L17 5L10 11Z" stroke="#fff" fill="#fff" />
    </StatusButton>
    <div className="ml-[2px] h-[30px] w-[4px] bg-[#3b4453]" />
    <div className="flex gap-px">
      <StatusButton label="Plein écran">
        <rect x="1" y="3" width="18" height="14" stroke="#dcdcdc" />
        <path d="M13 8L17 5M4 14L8 11" stroke="#dcdcdc" />
        <path d="M13 5H17V9ZM3 11V15H7Z" fill="#dcdcdc" />
      </StatusButton>
      <StatusButton label="Personnalisation">
        <path d="M0 2H20M0 7.500H20M0 12.500H20M0 18H20" stroke="#dcdcdc" strokeWidth="2" />
      </StatusButton>
    </div>
  </footer>
);

const App = () => {
  return (
    <div className="flex min-h-screen flex-col bg-[#222933] font-['Open_Sans',sans-serif] text-sm">
      <TitleBar />
      <MenuBar />
      <RibbonTabs />
      <Ribbon />
      <FileTabs />
      <div className="h-[5px] bg-[#3b4453]" />
      <main className="relative min-h-[692px] flex-1 bg-[#9d9d9d]">
        <Drawing />
        <CommandLine />
        <div className="absolute top-[-11px] left-[1250px] h-[11px] w-[440px] border-t-[5px] border-[#3b4453] bg-[#9d9d9d]" />
        <div className="absolute top-[653px] left-[1250px] h-[2px] w-[221px] bg-[#e8e8e8]" />
        <Palette name="Action de mise à l'échelle" sections={actionSections} side="left" />
        <Palette name="Paramètre linéaire" sections={linearSections} side="right" />
        <Callouts />
      </main>
      <LayoutTabs />
      <StatusBar />
    </div>
  );
};

export default App;
